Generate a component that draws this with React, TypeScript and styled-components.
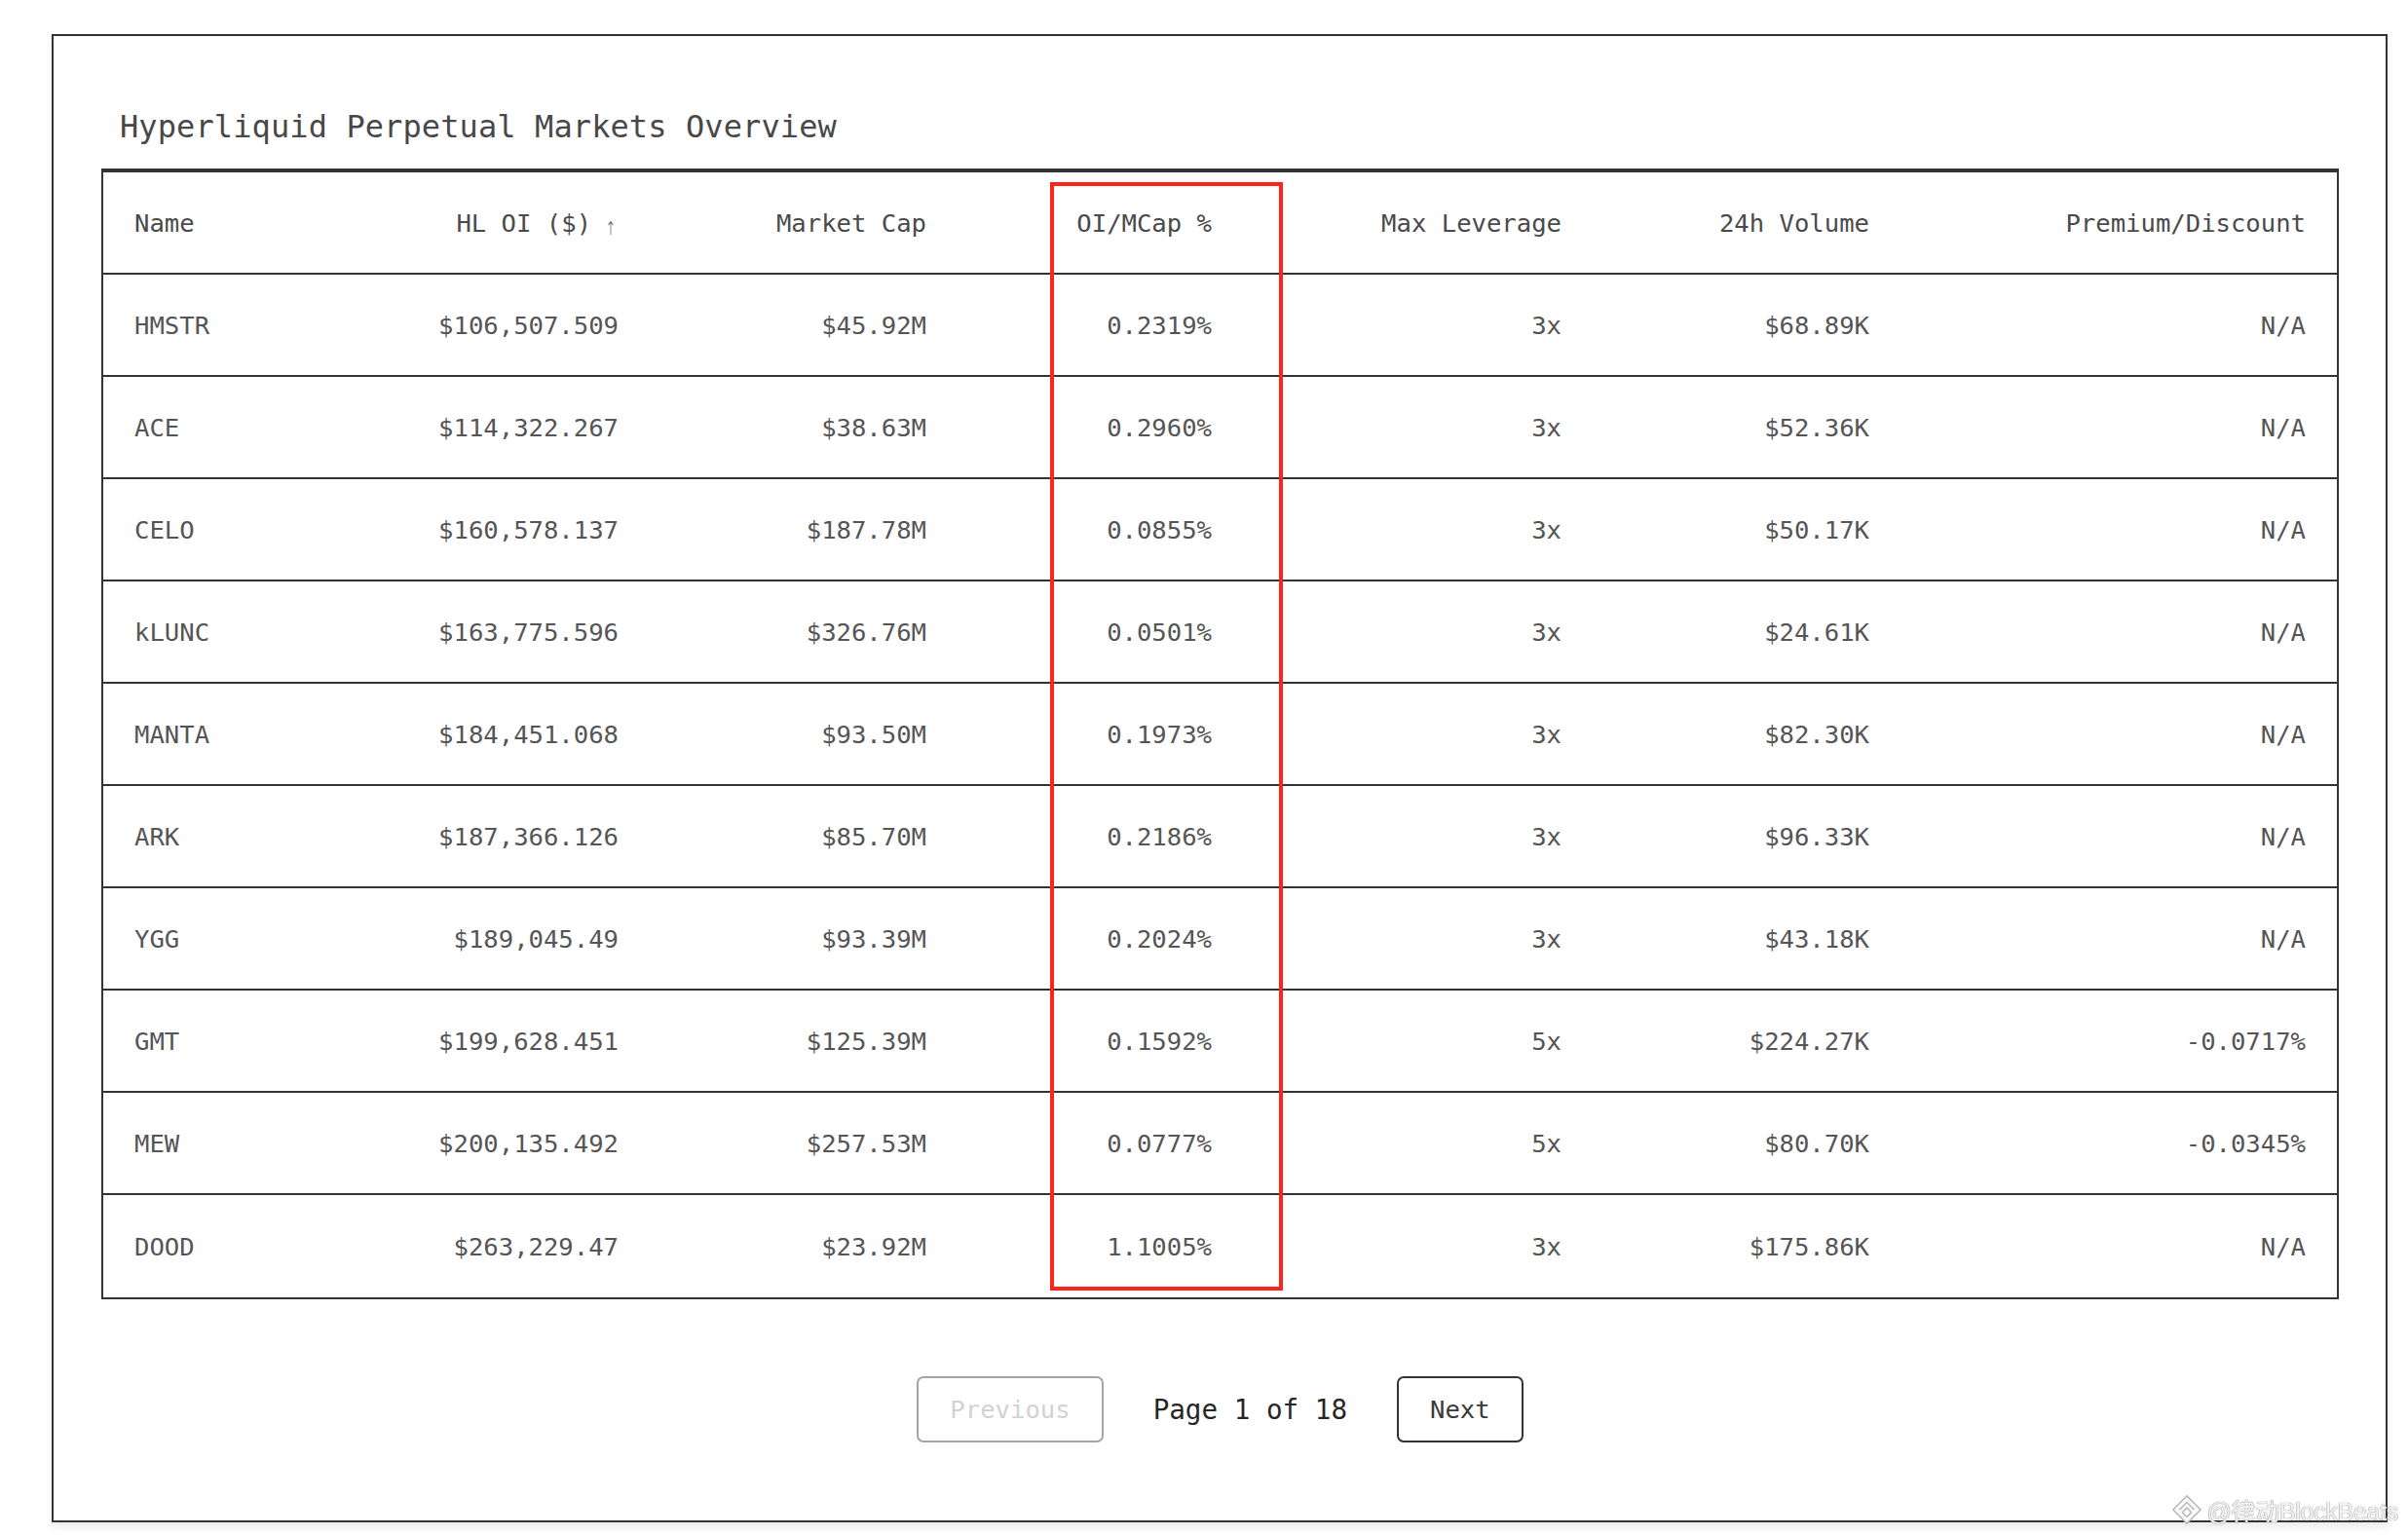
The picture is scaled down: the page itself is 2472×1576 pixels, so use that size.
import React from "react";
import styled, { createGlobalStyle } from "styled-components";

const GlobalStyle = createGlobalStyle`
  html, body { margin: 0; padding: 0; background: #ffffff; }
  body { font-family: "DejaVu Sans Mono", "Liberation Mono", monospace; }
`;

const COLS = "250px 311px 316px 293px 359px 316px 448px";

const Page = styled.div`
  position: relative;
  width: 2472px;
  height: 1576px;
  padding: 35px 0 0 53px;
  box-sizing: border-box;
  overflow: hidden;
`;

const Frame = styled.div`
  width: 2398px;
  height: 1528px;
  box-sizing: border-box;
  border: 2px solid #333;
  box-shadow: 0 5px 8px rgba(0, 0, 0, 0.08);
  padding: 69px 48px 0 49px;
  display: flex;
  flex-direction: column;
`;

const Title = styled.h1`
  margin: 0 0 19px 19px;
  font-family: "DejaVu Sans Mono", monospace;
  font-weight: 300;
  font-size: 32px;
  line-height: 48px;
  color: #484848;
  letter-spacing: 0.1px;
`;

const TableWrap = styled.div`
  position: relative;
  width: 2297px;
  box-sizing: border-box;
  border: 2px solid #333;
  border-top-width: 4px;
`;

const Row = styled.div<{ $last?: boolean }>`
  display: grid;
  grid-template-columns: ${COLS};
  height: 105px;
  box-sizing: border-box;
  border-bottom: ${(p) => (p.$last ? "none" : "2px solid #333")};
  align-items: center;
`;

const Cell = styled.div<{ $align?: "left" | "right"; $head?: boolean }>`
  padding: 0 32px;
  text-align: ${(p) => p.$align ?? "right"};
  font-family: "DejaVu Sans Mono", monospace;
  font-size: 25.6px;
  font-weight: 300;
  color: ${(p) => (p.$head ? "#4a4a4a" : "#555")};
  white-space: nowrap;
  padding-top: 1px;
`;

const SortArrow = styled.span`
  display: inline-block;
  font-family: "DejaVu Sans", sans-serif;
  font-size: 19px;
  margin-left: 12px;
  transform: scaleX(0.7);
  vertical-align: -3px;
  color: #555;
`;

const Highlight = styled.div`
  position: absolute;
  left: 972px;
  top: 10px;
  width: 239px;
  height: 1138px;
  box-sizing: border-box;
  border: 4px solid #ff2418;
  pointer-events: none;
`;

const Pager = styled.div`
  display: flex;
  justify-content: center;
  align-items: center;
  gap: 51px;
  margin-top: 79px;
`;

const PageButton = styled.button<{ $disabled?: boolean }>`
  height: 68px;
  padding: 0 32px;
  box-sizing: border-box;
  background: #fff;
  border: 2px solid ${(p) => (p.$disabled ? "#a4a4a4" : "#333")};
  border-radius: 7px;
  color: ${(p) => (p.$disabled ? "#d2d2d2" : "#3a3a3a")};
  font-family: "DejaVu Sans Mono", monospace;
  font-size: 25.6px;
  font-weight: 300;
  cursor: ${(p) => (p.$disabled ? "default" : "pointer")};
`;

const PageInfo = styled.span`
  font-family: "DejaVu Sans Mono", monospace;
  font-size: 27.6px;
  font-weight: 500;
  color: #262626;
`;

const Watermark = styled.div`
  position: absolute;
  right: 10px;
  top: 1532px;
  display: flex;
  align-items: center;
  gap: 4px;
  font-family: "Liberation Sans", "Noto Sans CJK SC", sans-serif;
  font-size: 25px;
  color: #f4f4f4;
  text-shadow: 0 0 1px #7a7a7a, 0 0 1px #9a9a9a;
  white-space: nowrap;
`;

const WmText = styled.span`
  letter-spacing: -0.3px;
`;

type Market = {
  name: string;
  oi: string;
  mcap: string;
  ratio: string;
  lev: string;
  vol: string;
  prem: string;
};

const markets: Market[] = [
  { name: "HMSTR", oi: "$106,507.509", mcap: "$45.92M", ratio: "0.2319%", lev: "3x", vol: "$68.89K", prem: "N/A" },
  { name: "ACE", oi: "$114,322.267", mcap: "$38.63M", ratio: "0.2960%", lev: "3x", vol: "$52.36K", prem: "N/A" },
  { name: "CELO", oi: "$160,578.137", mcap: "$187.78M", ratio: "0.0855%", lev: "3x", vol: "$50.17K", prem: "N/A" },
  { name: "kLUNC", oi: "$163,775.596", mcap: "$326.76M", ratio: "0.0501%", lev: "3x", vol: "$24.61K", prem: "N/A" },
  { name: "MANTA", oi: "$184,451.068", mcap: "$93.50M", ratio: "0.1973%", lev: "3x", vol: "$82.30K", prem: "N/A" },
  { name: "ARK", oi: "$187,366.126", mcap: "$85.70M", ratio: "0.2186%", lev: "3x", vol: "$96.33K", prem: "N/A" },
  { name: "YGG", oi: "$189,045.49", mcap: "$93.39M", ratio: "0.2024%", lev: "3x", vol: "$43.18K", prem: "N/A" },
  { name: "GMT", oi: "$199,628.451", mcap: "$125.39M", ratio: "0.1592%", lev: "5x", vol: "$224.27K", prem: "-0.0717%" },
  { name: "MEW", oi: "$200,135.492", mcap: "$257.53M", ratio: "0.0777%", lev: "5x", vol: "$80.70K", prem: "-0.0345%" },
  { name: "DOOD", oi: "$263,229.47", mcap: "$23.92M", ratio: "1.1005%", lev: "3x", vol: "$175.86K", prem: "N/A" },
];

const Logo = () => (
  <svg width="32" height="32" viewBox="0 0 34 34" fill="none" stroke="#b8b8b8" strokeWidth="1.6">
    <path d="M17 2 L32 17 L17 32 L2 17 Z" fill="#fafafa" />
    <path d="M9 17 L17 9 L25 17" />
    <path d="M12 20 L17 15 L22 20" />
    <path d="M17 25 L12 20 M17 25 L22 20" />
  </svg>
);

export default function App() {
  return (
    <>
      <GlobalStyle />
      <Page>
        <Frame>
          <Title>Hyperliquid Perpetual Markets Overview</Title>
          <TableWrap>
            <Row>
              <Cell $head $align="left">Name</Cell>
              <Cell $head>
                HL OI ($)<SortArrow>↑</SortArrow>
              </Cell>
              <Cell $head>Market Cap</Cell>
              <Cell $head>OI/MCap %</Cell>
              <Cell $head>Max Leverage</Cell>
              <Cell $head>24h Volume</Cell>
              <Cell $head>Premium/Discount</Cell>
            </Row>
            {markets.map((m, i) => (
              <Row key={m.name} $last={i === markets.length - 1}>
                <Cell $align="left">{m.name}</Cell>
                <Cell>{m.oi}</Cell>
                <Cell>{m.mcap}</Cell>
                <Cell>{m.ratio}</Cell>
                <Cell>{m.lev}</Cell>
                <Cell>{m.vol}</Cell>
                <Cell>{m.prem}</Cell>
              </Row>
            ))}
            <Highlight />
          </TableWrap>
          <Pager>
            <PageButton $disabled disabled>
              Previous
            </PageButton>
            <PageInfo>Page 1 of 18</PageInfo>
            <PageButton>Next</PageButton>
          </Pager>
        </Frame>
        <Watermark>
          <Logo />
          <WmText>@律动BlockBeats</WmText>
        </Watermark>
      </Page>
    </>
  );
}
